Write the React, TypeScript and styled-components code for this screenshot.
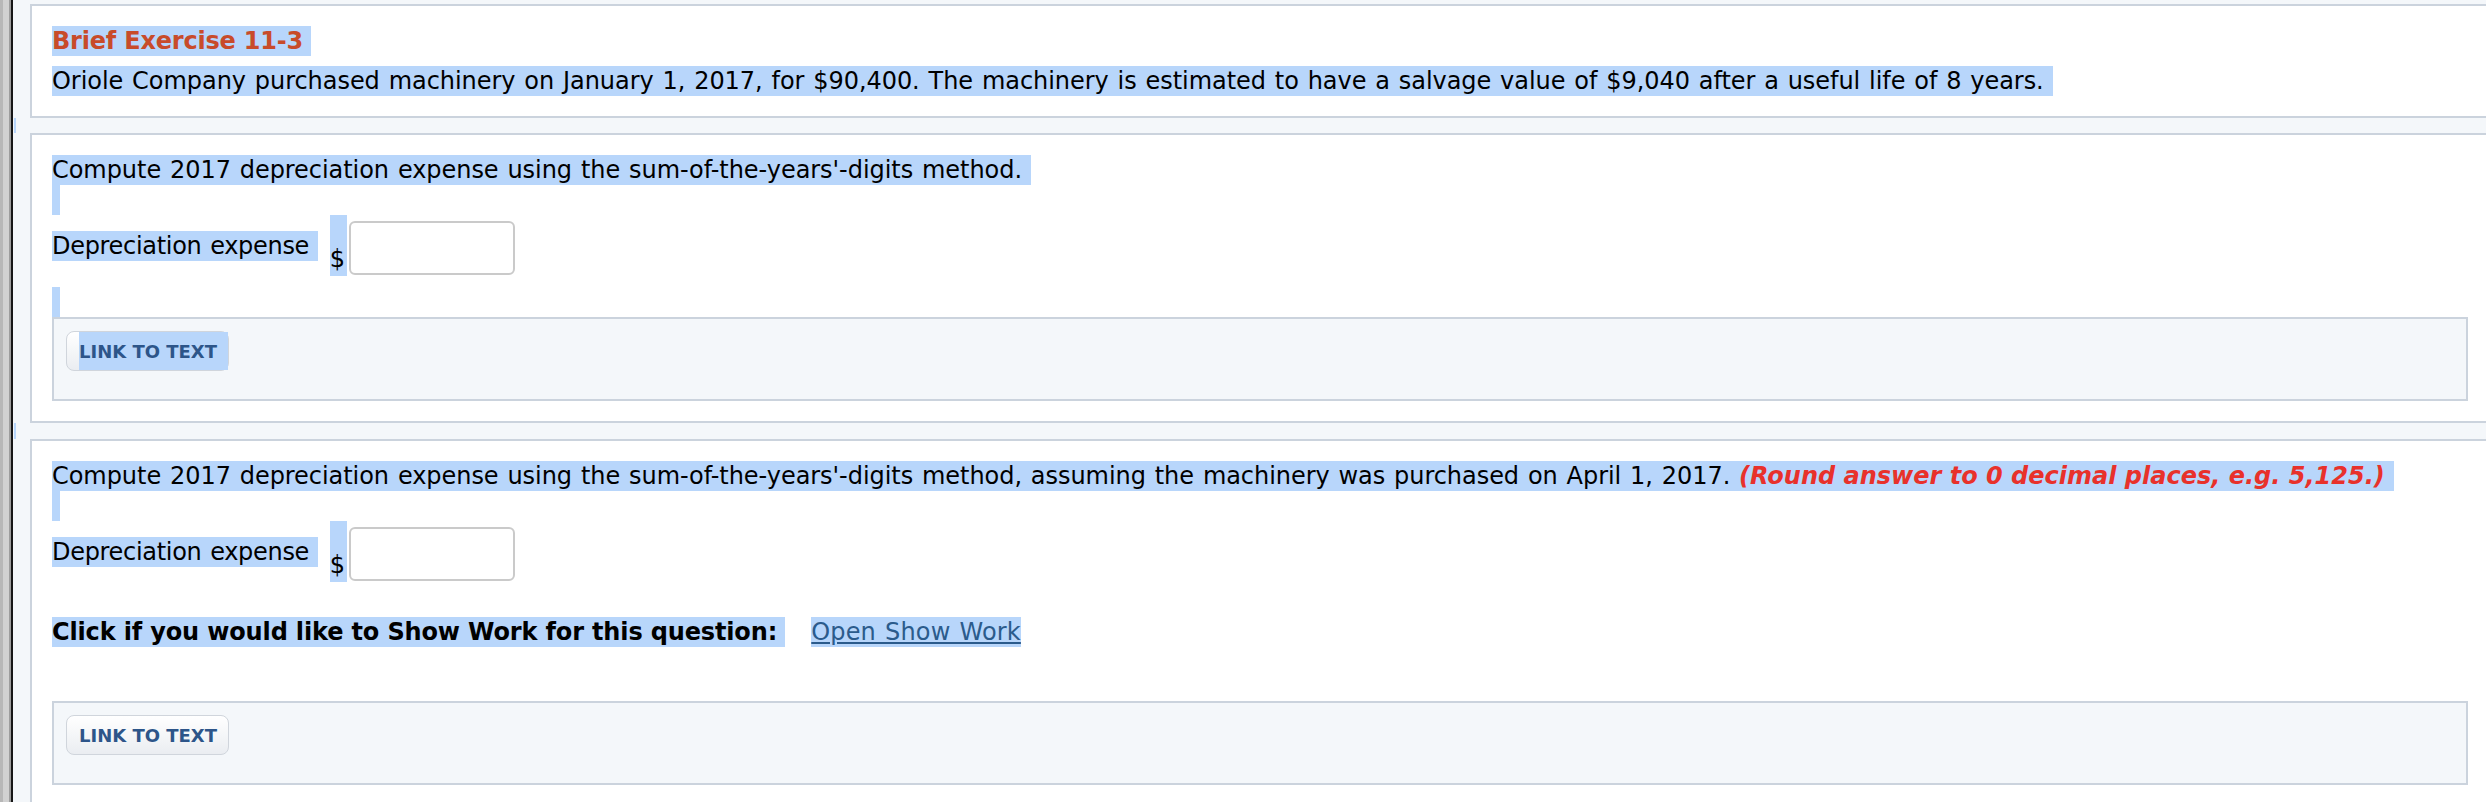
import React from 'react';
import styled, { createGlobalStyle } from 'styled-components';

const SELECTION = '#b8d6fb';

const GlobalStyle = createGlobalStyle`
	html, body {
		margin: 0;
		padding: 0;
		overflow: hidden;
	}
	body {
		font-family: "DejaVu Sans", Verdana, sans-serif;
		font-size: 24px;
		color: #000;
		background: #f4f7fa;
	}
`;

const App = () => {
	return (
		<>
			<GlobalStyle />
			<Page>
				<LeftFrame />
				<Main>
					<Card>
						<Title>
							<Sel $bold>{'Brief Exercise 11-3 '}</Sel>
						</Title>
						<Line>
							<Sel>
								{
									'Oriole Company purchased machinery on January 1, 2017, for $90,400. The machinery is estimated to have a salvage value of $9,040 after a useful life of 8 years. '
								}
							</Sel>
						</Line>
					</Card>

					<Band />

					<Card>
						<Line>
							<Sel>{"Compute 2017 depreciation expense using the sum-of-the-years'-digits method. "}</Sel>
						</Line>
						<BlankLine />
						<AnswerRow>
							<Label>{'Depreciation expense '}</Label>
							<DollarCell>
								<Dollar>$</Dollar>
								<Input type="text" />
							</DollarCell>
						</AnswerRow>
						<BlankLine $spaced />
						<Panel>
							<LinkButton>
								<ButtonLabel $selected>LINK TO TEXT</ButtonLabel>
							</LinkButton>
						</Panel>
					</Card>

					<Band $tall />

					<Card>
						<Line>
							<Sel>
								{
									"Compute 2017 depreciation expense using the sum-of-the-years'-digits method, assuming the machinery was purchased on April 1, 2017. "
								}
								<Hint>{'(Round answer to 0 decimal places, e.g. 5,125.)'}</Hint>
								{' '}
							</Sel>
						</Line>
						<BlankLine />
						<AnswerRow>
							<Label>{'Depreciation expense '}</Label>
							<DollarCell>
								<Dollar>$</Dollar>
								<Input type="text" />
							</DollarCell>
						</AnswerRow>
						<ShowWorkRow>
							<ShowWorkLabel $bold>{'Click if you would like to Show Work for this question: '}</ShowWorkLabel>
							<ShowWorkLink href="#">Open Show Work</ShowWorkLink>
						</ShowWorkRow>
						<Panel $spaced>
							<LinkButton>
								<ButtonLabel>LINK TO TEXT</ButtonLabel>
							</LinkButton>
						</Panel>
					</Card>
				</Main>
			</Page>
		</>
	);
};

const Page = styled.div`
	display: flex;
	width: 2486px;
	height: 802px;
	overflow: hidden;
	background: #f4f7fa;
`;

const LeftFrame = styled.div`
	flex: 0 0 13px;
	background: linear-gradient(
		to right,
		#b7b7b7 0 3px,
		#d1d1d1 3px 9px,
		#9d9d9d 9px 11px,
		#161616 11px 13px
	);
`;

const Main = styled.main`
	flex: 1;
	min-width: 0;
	padding: 4px 0 0 17px;
`;

const Card = styled.section`
	box-sizing: border-box;
	width: 2460px;
	padding: 20px;
	background: #fff;
	border: 2px solid #cbd3dd;
`;

const Band = styled.div<{ $tall?: boolean }>`
	display: flex;
	height: ${(props) => (props.$tall ? '16px' : '15px')};
	margin-left: -16px;

	&::before {
		content: '';
		width: 2px;
		background: ${SELECTION};
	}
`;

// selected run of text; Verdana has wider spaces than DejaVu Sans
const Sel = styled.span<{ $bold?: boolean }>`
	display: inline-block;
	line-height: 30px;
	white-space: pre;
	letter-spacing: ${(props) => (props.$bold ? '-0.2px' : '-0.05px')};
	word-spacing: ${(props) => (props.$bold ? '0' : '1.3px')};
	font-weight: ${(props) => (props.$bold ? 'bold' : 'normal')};
	background: ${SELECTION};
`;

const Title = styled.h1`
	margin: 0 0 10px;
	font-size: 24px;
	font-weight: bold;
	line-height: 30px;
	color: #c84b2a;
`;

const Line = styled.div`
	height: 30px;
	line-height: 30px;
	white-space: nowrap;
`;

const BlankLine = styled.div<{ $spaced?: boolean }>`
	width: 8px;
	height: 30px;
	margin-top: ${(props) => (props.$spaced ? '11px' : '0')};
	background: ${SELECTION};
`;

const AnswerRow = styled.div`
	display: flex;
	align-items: center;
	height: 61px;
`;

const Label = styled(Sel)`
	margin-right: 12px;
	letter-spacing: -0.3px;
`;

const DollarCell = styled.label`
	display: flex;
	align-items: flex-end;
	height: 61px;
`;

const Dollar = styled.span`
	box-sizing: border-box;
	display: flex;
	align-items: flex-end;
	width: 17px;
	height: 61px;
	padding-bottom: 2px;
	line-height: 30px;
	background: ${SELECTION};
`;

const Input = styled.input`
	box-sizing: border-box;
	width: 166px;
	height: 54px;
	margin: 0 0 1px 2px;
	padding: 0 8px;
	font: inherit;
	background: #fff;
	border: 2px solid #cacaca;
	border-radius: 6px;
	outline: none;
`;

const Panel = styled.div<{ $spaced?: boolean }>`
	box-sizing: border-box;
	height: 84px;
	margin-top: ${(props) => (props.$spaced ? '54px' : '0')};
	padding: 12px;
	background: #f4f7fa;
	border: 2px solid #cbd3dd;
`;

const LinkButton = styled.button`
	display: flex;
	align-items: stretch;
	height: 40px;
	padding: 0 0 0 12px;
	font-family: "DejaVu Sans", Verdana, sans-serif;
	font-size: 18px;
	font-weight: bold;
	color: #2d5589;
	background: linear-gradient(#ffffff, #eaedf1);
	border: 1px solid #d0d5dc;
	border-radius: 8px;
	cursor: pointer;
`;

const ButtonLabel = styled.span<{ $selected?: boolean }>`
	display: flex;
	align-items: center;
	padding-right: 11px;
	background: ${(props) => (props.$selected ? SELECTION : 'transparent')};
`;

const ShowWorkRow = styled.div`
	display: flex;
	margin-top: 35px;
	height: 30px;
`;

const ShowWorkLabel = styled(Sel)`
	margin-right: 26px;
	letter-spacing: -0.15px;
`;

const ShowWorkLink = styled.a`
	display: inline-block;
	line-height: 30px;
	letter-spacing: 0.15px;
	word-spacing: 1.3px;
	color: #2b5b8c;
	text-decoration: underline;
	background: ${SELECTION};
`;

const Hint = styled.span`
	font-weight: bold;
	font-style: italic;
	letter-spacing: 0;
	word-spacing: 0;
	color: #e8312b;
`;

export default App;
